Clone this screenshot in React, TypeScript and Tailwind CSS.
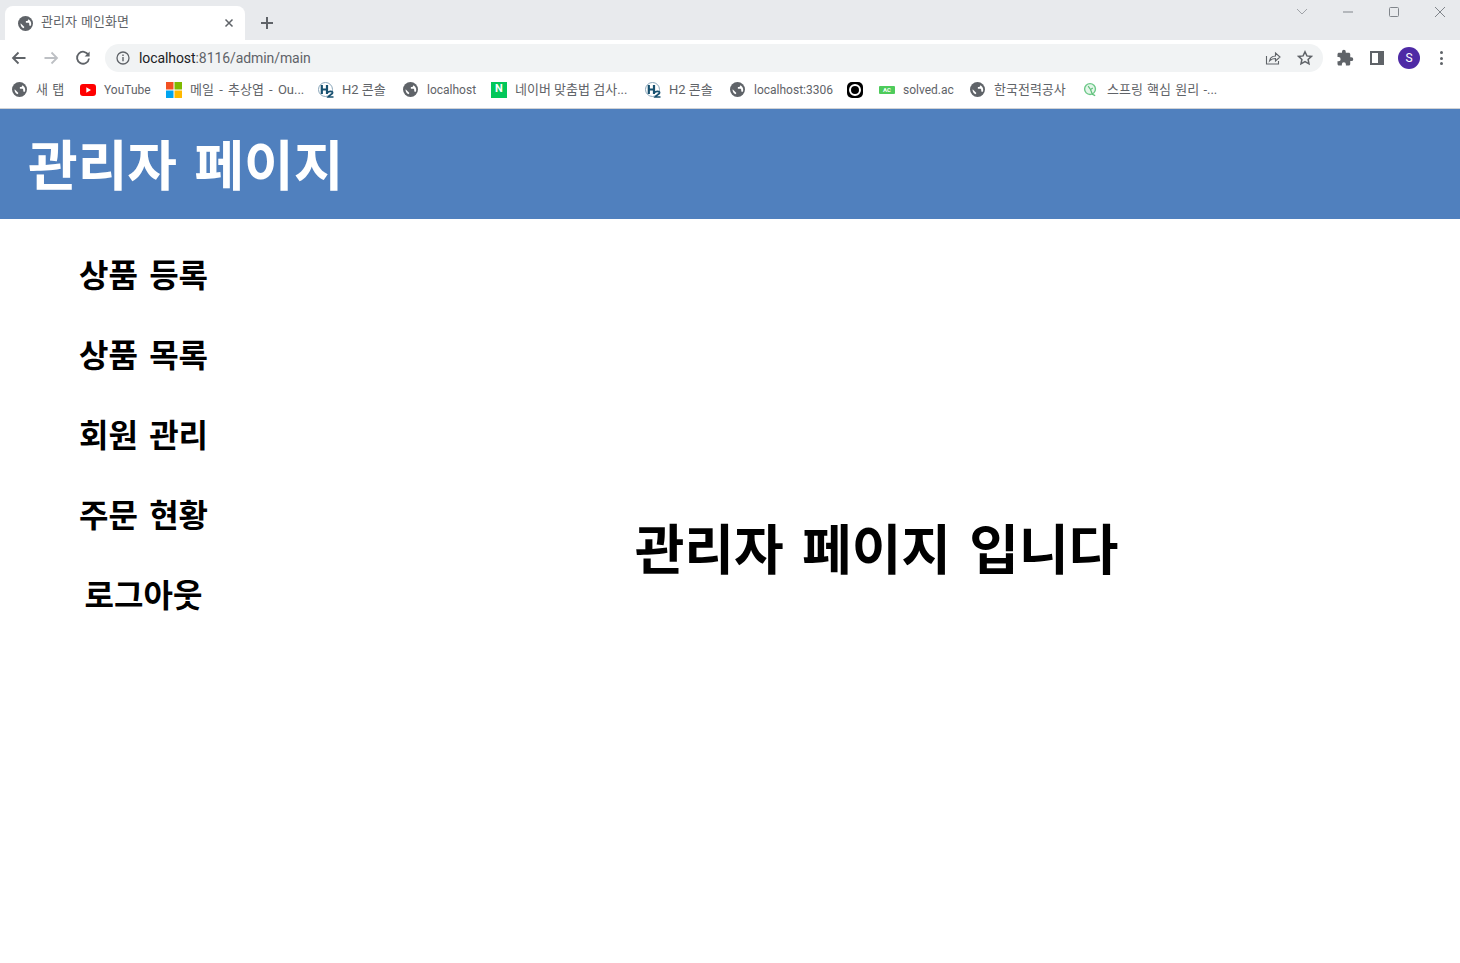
import { ReactNode } from "react";

const fontStack = "font-['Noto_Sans_CJK_KR',sans-serif]";
const chromeFont = "font-['Roboto','Noto_Sans_CJK_KR',sans-serif]";

function Globe({ className = "w-[15px] h-[15px]" }: { className?: string }) {
  return (
    <svg viewBox="2 2 20 20" className={`${className} shrink-0`}>
      <circle cx="12" cy="12" r="10" fill="#5f6368" />
      <path d="M10.500 16.500 5.500 11.500c-.4 3 1.200 5.600 4 6.800z" fill="#fff" />
      <path d="M15.500 6.500c0 1.500-1 2-2 2h-1v2.500h3c1 0 1.500.7 1.500 1.500v2c1 0 1.500.3 1.800.8 1.700-2.800 1-6.600-2.300-8.800z" fill="#fff" />
    </svg>
  );
}

function H2Icon() {
  return (
    <svg viewBox="0 0 16 16" className="w-4 h-4 shrink-0">
      <circle cx="7.500" cy="7.500" r="7" fill="none" stroke="#8aa6ba" strokeWidth="1" />
      <path d="M3.800 3v9M9 3v9M3.800 7.500H9" stroke="#17506f" strokeWidth="2.200" fill="none" />
      <path d="M9.800 10.500c.8-1.500 5-1.500 4.800.4-.2 1.300-3.300 2.300-4.500 4.100h5.400" stroke="#17506f" strokeWidth="1.700" fill="none" />
    </svg>
  );
}

function Bookmark({ icon, label, textClass = "w-auto" }: { icon: ReactNode; label?: string; textClass?: string }) {
  return (
    <div className="flex items-center gap-2 h-6">
      <div className="w-4 flex justify-start shrink-0">{icon}</div>
      {label && <span className={`text-[#5f6368] whitespace-nowrap ${textClass}`}>{label}</span>}
    </div>
  );
}

const menuItems = ["상품 등록", "상품 목록", "회원 관리", "주문 현황", "로그아웃"];

export default function App() {
  return (
    <div className={`min-h-[963px] bg-white flex flex-col ${fontStack}`}>
      {/* 탭 영역 */}
      <div className={`h-10 bg-[#e8eaed] flex items-end pl-[5px] relative ${chromeFont}`}>
        <div className="w-[240px] h-[34px] bg-white rounded-t-[8px] flex items-center pl-[13px] pr-[11px]">
          <Globe />
          <span className="ml-2 mb-[2px] text-[13px] [word-spacing:1px] text-[#5f6368]">관리자 메인화면</span>
          <svg viewBox="0 0 10 10" className="w-[10px] h-[10px] ml-auto">
            <path d="M1.5 1.5l7 7M8.5 1.5l-7 7" stroke="#5f6368" strokeWidth="1.5" />
          </svg>
        </div>
        <svg viewBox="0 0 14 14" className="w-[14px] h-[14px] ml-[15px] mb-[10px]">
          <path d="M7 1v12M1 7h12" stroke="#5f6368" strokeWidth="2" />
        </svg>
        <div className="ml-auto self-start flex items-center pt-[6px] pr-[14px]">
          <svg viewBox="0 0 12 8" className="w-[12px] h-2">
            <path d="M1 1l5 5 5-5" stroke="#a0a3a8" strokeWidth="1" fill="none" />
          </svg>
          <svg viewBox="0 0 10 12" className="w-[10px] h-3 ml-[35px]">
            <path d="M0 6h10" stroke="#80858b" strokeWidth="1" />
          </svg>
          <svg viewBox="0 0 10 10" className="w-[10px] h-[10px] ml-9">
            <rect x=".5" y=".5" width="9" height="9" rx="1" stroke="#80858b" fill="none" />
          </svg>
          <svg viewBox="0 0 12 12" className="w-3 h-3 ml-[35px]">
            <path d="M1 1l10 10M11 1L1 11" stroke="#80858b" strokeWidth="1" />
          </svg>
        </div>
      </div>

      {/* 주소창 */}
      <div className={`h-9 bg-white flex items-center pl-[11px] ${chromeFont}`}>
        <svg viewBox="0 0 16 16" className="w-4 h-4">
          <path d="M14.5 8h-12M7.5 2.5 2 8l5.5 5.5" stroke="#5f6368" strokeWidth="1.8" fill="none" />
        </svg>
        <svg viewBox="0 0 16 16" className="w-4 h-4 ml-4">
          <path d="M1.5 8h12M8.5 2.5 14 8l-5.5 5.5" stroke="#bdc0c4" strokeWidth="1.8" fill="none" />
        </svg>
        <svg viewBox="0 0 16 16" className="w-4 h-4 ml-4">
          <path d="M13.4 5A6 6 0 1 0 14 8.5" stroke="#5f6368" strokeWidth="1.8" fill="none" />
          <path d="M14.6 1.6v5h-5z" fill="#5f6368" />
        </svg>
        <div className="ml-[14px] w-[1218px] h-7 rounded-full bg-[#f1f3f4] flex items-center pl-[11px] pr-[10px]">
          <svg viewBox="0 0 14 14" className="w-[14px] h-[14px]">
            <circle cx="7" cy="7" r="6" stroke="#5f6368" strokeWidth="1.3" fill="none" />
            <path d="M7 6v4.2M7 3.4v1.5" stroke="#5f6368" strokeWidth="1.4" />
          </svg>
          <span className="ml-[9px] text-[14px] tracking-[-0.08px] text-[#202124]">
            localhost<span className="text-[#5f6368]">:8116/admin/main</span>
          </span>
          <svg viewBox="0 0 16 16" className="w-4 h-4 ml-auto">
            <path d="M1.5 6v8h12v-3" stroke="#5f6368" strokeWidth="1.1" fill="none" />
            <path d="M4.5 11c.5-3 3-5 6-5V3l4.500 4-4.500 4V8.500c-2.500 0-4.500.8-6 2.500Z" stroke="#5f6368" strokeWidth="1.1" fill="none" />
          </svg>
          <svg viewBox="0 0 16 16" className="w-4 h-4 ml-4">
            <path d="M8 1.800l1.900 4.100 4.500.5-3.300 3 .9 4.400L8 11.600l-4 2.200.9-4.400-3.300-3 4.500-.5Z" stroke="#5f6368" strokeWidth="1.500" fill="none" />
          </svg>
        </div>
        <svg viewBox="0 0 24 24" className="w-[18px] h-[18px] ml-[13px]">
          <path d="M20.500 11H19V7c0-1.100-.9-2-2-2h-4V3.500a2.500 2.500 0 0 0-5 0V5H4c-1.100 0-2 .9-2 2v3.800h1.500a2.700 2.700 0 0 1 0 5.400H2V20c0 1.100.9 2 2 2h3.800v-1.500a2.700 2.700 0 0 1 5.400 0V22H17c1.100 0 2-.9 2-2v-4h1.500a2.500 2.500 0 0 0 0-5z" fill="#5f6368" />
        </svg>
        <svg viewBox="0 0 14 14" className="w-[14px] h-[14px] ml-4">
          <path d="M0 0h14v14H0zM2 2v10h6V2z" fill="#5f6368" fillRule="evenodd" />
        </svg>
        <div className="w-[22px] h-[22px] ml-[14px] rounded-full bg-[#4e2aa5] flex items-center justify-center text-[12px] text-white">
          S
        </div>
        <div className="ml-5 flex flex-col gap-[2.5px]">
          <span className="w-[3px] h-[3px] rounded-full bg-[#5f6368]" />
          <span className="w-[3px] h-[3px] rounded-full bg-[#5f6368]" />
          <span className="w-[3px] h-[3px] rounded-full bg-[#5f6368]" />
        </div>
      </div>

      {/* 북마크 바 */}
      <div className={`h-[33px] bg-white border-b border-[#d0d2d5] flex items-center pl-3 pb-[5px] gap-4 ${chromeFont}`}>
        <Bookmark icon={<Globe />} label="새 탭" textClass="w-[28px] text-[13px] [word-spacing:1px]" />
        <Bookmark
          icon={
            <svg viewBox="0 0 16 12" className="w-4 h-3 shrink-0">
              <rect width="16" height="12" rx="3" fill="#f00" />
              <path d="M6.300 3.300v5.400L11 6z" fill="#fff" />
            </svg>
          }
          label="YouTube"
          textClass="w-[46px] text-[12px]"
        />
        <Bookmark
          icon={
            <svg viewBox="0 0 16 16" className="w-4 h-4 shrink-0">
              <rect width="7.500" height="7.500" fill="#f25022" />
              <rect x="8.500" width="7.500" height="7.500" fill="#7fba00" />
              <rect y="8.500" width="7.500" height="7.500" fill="#00a4ef" />
              <rect x="8.500" y="8.500" width="7.500" height="7.500" fill="#ffb900" />
            </svg>
          }
          label="메일 - 추상엽 - Ou..."
          textClass="w-[112px] text-[13px] [word-spacing:2px]"
        />
        <Bookmark icon={<H2Icon />} label="H2 콘솔" textClass="w-[45px] text-[13px]" />
        <Bookmark icon={<Globe />} label="localhost" textClass="w-[48px] text-[12px]" />
        <Bookmark
          icon={
            <div className="w-4 h-4 bg-[#03c75a] flex items-center justify-center text-[11px] font-bold text-white">
              N
            </div>
          }
          label="네이버 맞춤법 검사..."
          textClass="w-[114px] text-[13px]"
        />
        <Bookmark icon={<H2Icon />} label="H2 콘솔" textClass="w-[45px] text-[13px]" />
        <Bookmark icon={<Globe />} label="localhost:3306" textClass="w-[77px] text-[12px]" />
        <Bookmark
          icon={
            <div className="w-4 h-4 rounded-[5px] bg-black flex items-center justify-center">
              <div className="w-3 h-3 rounded-full border-2 border-white" />
            </div>
          }
        />
        <Bookmark
          icon={
            <div className="w-4 h-2 rounded-[1px] bg-[#4ecb5b] flex items-center justify-center text-[6px] leading-none font-bold text-white">
              AC
            </div>
          }
          label="solved.ac"
          textClass="w-[51px] text-[12px]"
        />
        <Bookmark icon={<Globe />} label="한국전력공사" textClass="w-[73px] text-[13px]" />
        <Bookmark
          icon={
            <svg viewBox="0 0 16 16" className="w-[15px] h-[15px] shrink-0">
              <circle cx="7.500" cy="7.500" r="5.800" stroke="#6cc888" strokeWidth="1.500" fill="#e4f5e9" />
              <path d="M5.500 4.500 8 8l2 5 3 1.500M8 8l2.500-1.500" stroke="#5fc07a" strokeWidth="1.300" fill="none" />
            </svg>
          }
          label="스프링 핵심 원리 -..."
          textClass="text-[13px] [word-spacing:1px]"
        />
      </div>

      {/* 페이지 헤더 */}
      <header className="h-[110px] bg-[#5080be] flex items-center pl-7">
        <h1 className="mb-[2px] text-[54px] leading-none [word-spacing:5px] font-bold text-white">관리자 페이지</h1>
      </header>

      <div className="flex flex-1">
        <nav className="w-[287px] pt-[14px]">
          <ul>
            {menuItems.map((item) => (
              <li key={item} className="h-20 flex items-center justify-center text-[32px] [word-spacing:4px] font-bold text-black">
                {item}
              </li>
            ))}
          </ul>
        </nav>
        <main className="flex-1 pt-[271px] pl-[6px] text-center">
          <h2 className="text-[54px] leading-[114px] [word-spacing:6px] font-bold text-black">관리자 페이지 입니다</h2>
        </main>
      </div>
    </div>
  );
}
